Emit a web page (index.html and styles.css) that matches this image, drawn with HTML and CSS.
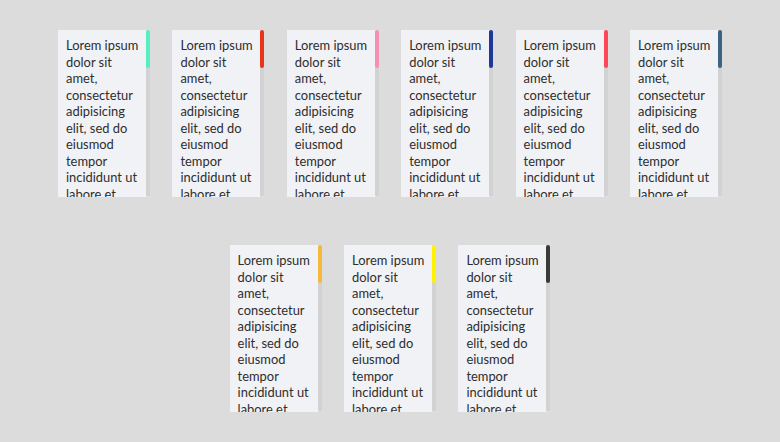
FILE: index.html
```html
<!DOCTYPE html>
<html lang="en">
<head>
    <meta charset="UTF-8">
    <meta name="viewport" content="width=device-width, initial-scale=1.0">
    <title>Scrollbars</title>
    <link rel="stylesheet" href="styles.css">
</head>
<body>

    <!-- one box per thumb colour -->
    <div class="boxes">
        <div class="box mint">
            <div class="text">Lorem ipsum dolor sit amet, consectetur adipisicing elit, sed do eiusmod tempor incididunt ut labore et dolore magna aliqua. Ut enim ad minim veniam, quis nostrud exercitation ullamco laboris nisi ut aliquip ex ea commodo consequat.</div>
            <div class="bar"><div class="thumb"></div></div>
        </div>
        <div class="box flame">
            <div class="text">Lorem ipsum dolor sit amet, consectetur adipisicing elit, sed do eiusmod tempor incididunt ut labore et dolore magna aliqua. Ut enim ad minim veniam, quis nostrud exercitation ullamco laboris nisi ut aliquip ex ea commodo consequat.</div>
            <div class="bar"><div class="thumb"></div></div>
        </div>
        <div class="box pink">
            <div class="text">Lorem ipsum dolor sit amet, consectetur adipisicing elit, sed do eiusmod tempor incididunt ut labore et dolore magna aliqua. Ut enim ad minim veniam, quis nostrud exercitation ullamco laboris nisi ut aliquip ex ea commodo consequat.</div>
            <div class="bar"><div class="thumb"></div></div>
        </div>
        <div class="box navy">
            <div class="text">Lorem ipsum dolor sit amet, consectetur adipisicing elit, sed do eiusmod tempor incididunt ut labore et dolore magna aliqua. Ut enim ad minim veniam, quis nostrud exercitation ullamco laboris nisi ut aliquip ex ea commodo consequat.</div>
            <div class="bar"><div class="thumb"></div></div>
        </div>
        <div class="box melon">
            <div class="text">Lorem ipsum dolor sit amet, consectetur adipisicing elit, sed do eiusmod tempor incididunt ut labore et dolore magna aliqua. Ut enim ad minim veniam, quis nostrud exercitation ullamco laboris nisi ut aliquip ex ea commodo consequat.</div>
            <div class="bar"><div class="thumb"></div></div>
        </div>
        <div class="box slate">
            <div class="text">Lorem ipsum dolor sit amet, consectetur adipisicing elit, sed do eiusmod tempor incididunt ut labore et dolore magna aliqua. Ut enim ad minim veniam, quis nostrud exercitation ullamco laboris nisi ut aliquip ex ea commodo consequat.</div>
            <div class="bar"><div class="thumb"></div></div>
        </div>
        <div class="box butter">
            <div class="text">Lorem ipsum dolor sit amet, consectetur adipisicing elit, sed do eiusmod tempor incididunt ut labore et dolore magna aliqua. Ut enim ad minim veniam, quis nostrud exercitation ullamco laboris nisi ut aliquip ex ea commodo consequat.</div>
            <div class="bar"><div class="thumb"></div></div>
        </div>
        <div class="box lemon">
            <div class="text">Lorem ipsum dolor sit amet, consectetur adipisicing elit, sed do eiusmod tempor incididunt ut labore et dolore magna aliqua. Ut enim ad minim veniam, quis nostrud exercitation ullamco laboris nisi ut aliquip ex ea commodo consequat.</div>
            <div class="bar"><div class="thumb"></div></div>
        </div>
        <div class="box coal">
            <div class="text">Lorem ipsum dolor sit amet, consectetur adipisicing elit, sed do eiusmod tempor incididunt ut labore et dolore magna aliqua. Ut enim ad minim veniam, quis nostrud exercitation ullamco laboris nisi ut aliquip ex ea commodo consequat.</div>
            <div class="bar"><div class="thumb"></div></div>
        </div>
    </div>

</body>
</html>
```

FILE: styles.css
```css
body{
    margin: 0;
    background-color: #dcdcdc;
    font-family: Lato, "Open Sans", Arial, sans-serif;
}
.boxes{
    max-width: 700px;
    margin: 0 auto;
    padding-top: 30px;
    display: flex;
    flex-wrap: wrap;
    justify-content: center;
    gap: 48px 22.4px;
}
.box{
    width: 92px;
    height: 167px;
    display: flex;
    background-color: #f1f2f6;
}
.text{
    flex: 1;
    min-width: 0;
    overflow: hidden;
    padding: 7px 2px 0 8px;
    color: #2e2e2e;
    font-size: 12.9px;
    line-height: 16.5px;
}

/* thin scrollbar, thumb colour set per box */
.bar{
    width: 4px;
    background-color: #d2d2d2;
    border-radius: 2px;
}
.thumb{
    height: 38px;
    border-radius: 2px;
    background-color: #999;
}
.mint .thumb{ background-color: #55efc4; }
.flame .thumb{ background-color: #e8341a; }
.pink .thumb{ background-color: #f78fb3; }
.navy .thumb{ background-color: #1e3799; }
.melon .thumb{ background-color: #ff4757; }
.slate .thumb{ background-color: #3c6382; }
.butter .thumb{ background-color: #f6b93b; }
.lemon .thumb{ background-color: #fff200; }
.coal .thumb{ background-color: #3a3a3a; }
```
